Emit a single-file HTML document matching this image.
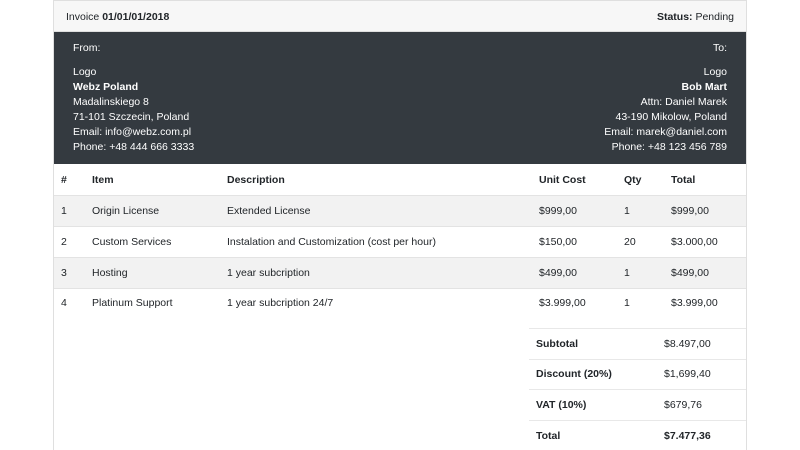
<!DOCTYPE html>
<html><head><meta charset="utf-8"><style>
*{margin:0;padding:0;box-sizing:border-box}
html,body{width:800px;height:450px;overflow:hidden}
body{background:#fff;font-family:"Liberation Sans",sans-serif;font-size:10.5px;color:#212529;position:relative}
.card{position:absolute;left:53px;top:0;width:694px;height:460px;border:1px solid #dfdfdf}
.hdr{position:absolute;left:0;top:0;width:692px;height:31px;background:#f7f7f7;border-bottom:1px solid #dfdfdf}
.t{position:absolute;white-space:nowrap;line-height:12px}
.dark{position:absolute;left:0;top:31px;width:692px;height:132px;background:#343a40;color:#fff}
.row{position:absolute;left:0;width:692px;height:31px;border-top:1px solid #e3e3e3}
.g{background:#f2f2f2}
b{font-weight:bold}
</style></head><body>
<div class="card">
<div class="hdr">
<div class="t" style="left:12px;top:10px">Invoice <b>01/01/01/2018</b></div>
<div class="t" style="right:12px;top:10px"><b>Status:</b> Pending</div>
</div>
<div class="dark">
<div class="t" style="left:19px;top:10px">From:</div>
<div style="position:absolute;left:19px;top:33px;line-height:15px">Logo<br><b>Webz Poland</b><br>Madalinskiego 8<br>71-101 Szczecin, Poland<br>Email: info@webz.com.pl<br>Phone: +48 444 666 3333</div>
<div class="t" style="right:19px;top:10px">To:</div>
<div style="position:absolute;right:19px;top:33px;line-height:15px;text-align:right">Logo<br><b>Bob Mart</b><br>Attn: Daniel Marek<br>43-190 Mikolow, Poland<br>Email: marek@daniel.com<br>Phone: +48 123 456 789</div>
</div>
<div class="row" style="top:163px;border-top:none"></div>
<div class="t" style="left:7px;top:173px"><b>#</b></div>
<div class="t" style="left:38px;top:173px"><b>Item</b></div>
<div class="t" style="left:173px;top:173px"><b>Description</b></div>
<div class="t" style="left:485px;top:173px"><b>Unit Cost</b></div>
<div class="t" style="left:570px;top:173px"><b>Qty</b></div>
<div class="t" style="left:617px;top:173px"><b>Total</b></div>

<div class="row g" style="top:194px"></div>
<div class="row" style="top:225px"></div>
<div class="row g" style="top:256px"></div>
<div class="row" style="top:287px"></div>

<div class="t" style="left:7px;top:204px">1</div><div class="t" style="left:38px;top:204px">Origin License</div><div class="t" style="left:173px;top:204px">Extended License</div><div class="t" style="left:485px;top:204px">$999,00</div><div class="t" style="left:570px;top:204px">1</div><div class="t" style="left:617px;top:204px">$999,00</div>
<div class="t" style="left:7px;top:235px">2</div><div class="t" style="left:38px;top:235px">Custom Services</div><div class="t" style="left:173px;top:235px">Instalation and Customization (cost per hour)</div><div class="t" style="left:485px;top:235px">$150,00</div><div class="t" style="left:570px;top:235px">20</div><div class="t" style="left:617px;top:235px">$3.000,00</div>
<div class="t" style="left:7px;top:266px">3</div><div class="t" style="left:38px;top:266px">Hosting</div><div class="t" style="left:173px;top:266px">1 year subcription</div><div class="t" style="left:485px;top:266px">$499,00</div><div class="t" style="left:570px;top:266px">1</div><div class="t" style="left:617px;top:266px">$499,00</div>
<div class="t" style="left:7px;top:296px">4</div><div class="t" style="left:38px;top:296px">Platinum Support</div><div class="t" style="left:173px;top:296px">1 year subcription 24/7</div><div class="t" style="left:485px;top:296px">$3.999,00</div><div class="t" style="left:570px;top:296px">1</div><div class="t" style="left:617px;top:296px">$3.999,00</div>

<div style="position:absolute;left:475px;top:327px;width:217px;border-top:1px solid #e8e8e8"></div>
<div style="position:absolute;left:475px;top:358px;width:217px;border-top:1px solid #e8e8e8"></div>
<div style="position:absolute;left:475px;top:388px;width:217px;border-top:1px solid #e8e8e8"></div>
<div style="position:absolute;left:475px;top:419px;width:217px;border-top:1px solid #e8e8e8"></div>
<div class="t" style="left:482px;top:337px"><b>Subtotal</b></div><div class="t" style="left:610px;top:337px">$8.497,00</div>
<div class="t" style="left:482px;top:367px"><b>Discount (20%)</b></div><div class="t" style="left:610px;top:367px">$1,699,40</div>
<div class="t" style="left:482px;top:398px"><b>VAT (10%)</b></div><div class="t" style="left:610px;top:398px">$679,76</div>
<div class="t" style="left:482px;top:429px"><b>Total</b></div><div class="t" style="left:610px;top:429px"><b>$7.477,36</b></div>
</div>
</body></html>
